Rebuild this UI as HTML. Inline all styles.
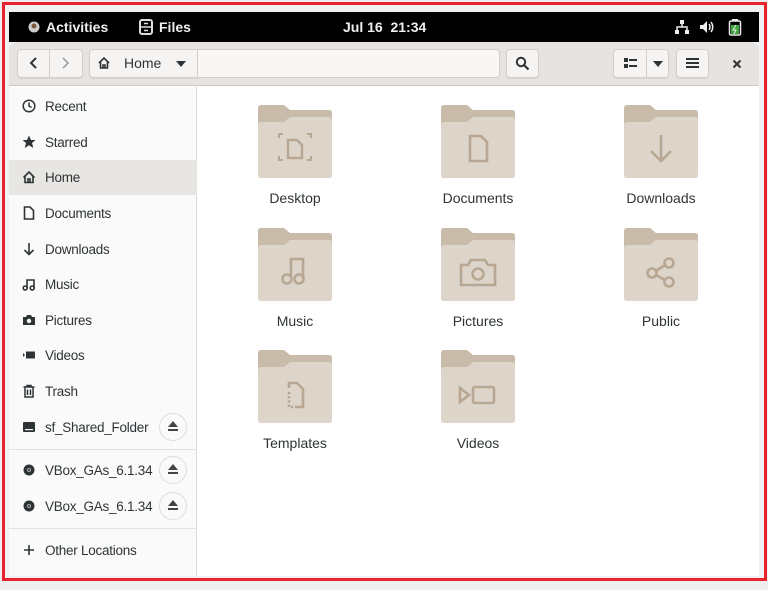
<!DOCTYPE html>
<html><head><meta charset="utf-8"><style>
*{margin:0;padding:0;box-sizing:border-box}
body{width:768px;height:590px;background:#efefef;position:relative;overflow:hidden;font-family:"Liberation Sans",sans-serif;font-size:14px;color:#2e3436}
.frame{position:absolute;left:2px;top:2px;width:765px;height:579px;border:3px solid #e8232b;background:#f0f0f0}
.top{position:absolute;left:9px;top:12px;width:750px;height:30px;background:#000;color:#eee;font-weight:bold;font-size:14px}
.top span{position:absolute;top:7px}
.win{position:absolute;left:9px;top:42px;width:750px;height:534px;background:#fff;border-radius:8px 8px 0 0;overflow:hidden}
.hb{position:absolute;left:0;top:0;width:750px;height:44px;background:#e6e3e0;border-bottom:1px solid #cdc7c2}
.btn{position:absolute;top:7px;height:29px;background:#f5f4f3;border:1px solid #d3cfcb;border-radius:4px;box-shadow:0 1px 1px rgba(0,0,0,.06)}
.side{position:absolute;left:0;top:45px;width:188px;height:489px;background:#fafafa;border-right:1px solid #dcdad7}
.it{position:absolute;left:0;width:188px;height:35px;line-height:35px;padding-left:36px;font-size:13.5px;letter-spacing:-0.25px;color:#2e3436}
.it svg{position:absolute;left:13px;top:10px}
.sep{position:absolute;left:0;width:188px;height:1px;background:#e4e2df}
.ej{position:absolute;left:150px;top:3px;width:28px;height:28px;border:1px solid #e0dcd8;border-radius:50%}
.ej:after{content:"";position:absolute;left:8px;top:7px;border-left:5px solid transparent;border-right:5px solid transparent;border-bottom:6px solid #444}
.ej:before{content:"";position:absolute;left:8px;top:15px;width:10px;height:2px;background:#444}
.f{position:absolute;width:120px;text-align:center;font-size:14px;color:#2e3436}
.f svg{display:block;margin:0 auto 11px}
</style></head><body>
<div class="frame"></div>
<div class="top">
<svg style="position:absolute;left:19px;top:9px" width="12" height="12"><circle cx="6" cy="6" r="5.5" fill="#ccc"/><circle cx="6" cy="5" r="2.5" fill="#7a5a3a"/></svg>
<span style="left:37px">Activities</span>
<svg style="position:absolute;left:130px;top:7px" width="14" height="16"><rect x="1" y="1" width="12" height="14" rx="2" fill="none" stroke="#ddd" stroke-width="2"/><path d="M1 8H13M5 4.5H9M5 11.5H9" stroke="#ddd" stroke-width="1.5"/></svg>
<span style="left:150px">Files</span>
<span style="left:334px;font-weight:bold">Jul 16&nbsp; 21:34</span>
<svg style="position:absolute;left:665px;top:7px" width="16" height="16" fill="#eee"><rect x="6" y="1" width="4" height="4"/><rect x="1" y="11" width="4" height="4"/><rect x="11" y="11" width="4" height="4"/><path d="M8 5V8M3 11V8H13V11" stroke="#eee" fill="none" stroke-width="1.5"/></svg>
<svg style="position:absolute;left:690px;top:7px" width="16" height="16" fill="#eee"><path d="M1 6H4L8 2V14L4 10H1Z"/><path d="M10 5Q12 8 10 11M12 3Q15.5 8 12 13" stroke="#eee" fill="none" stroke-width="1.5"/></svg>
<svg style="position:absolute;left:719px;top:6px" width="14" height="18"><rect x="1.5" y="3" width="11" height="14" rx="1.5" fill="none" stroke="#eee" stroke-width="1.5"/><rect x="4" y="1" width="6" height="2" fill="#eee"/><rect x="3" y="7" width="8" height="9" fill="#3da53d"/><path d="M8 7L5 12H8L6 16" stroke="#eee" fill="none" stroke-width="1"/></svg>
</div>
<div class="win">
<div class="hb">
<div class="btn" style="left:8px;width:66px"></div>
<div style="position:absolute;left:40px;top:8px;width:1px;height:27px;background:#d3cfcb"></div>
<svg style="position:absolute;left:19px;top:15px" width="12" height="12"><path d="M8 1L3 6L8 11" stroke="#2e3436" stroke-width="2" fill="none"/></svg>
<svg style="position:absolute;left:50px;top:15px" width="12" height="12"><path d="M4 1L9 6L4 11" stroke="#999" stroke-width="1.5" fill="none"/></svg>
<div class="btn" style="left:80px;width:110px;border-radius:4px 0 0 4px"></div>
<svg style="position:absolute;left:88px;top:14px" width="14" height="14"><path d="M2 7L7 2L12 7M3.5 6V12H10.5V6M6 12V9H8V12" stroke="#2e3436" stroke-width="1.6" fill="none"/></svg>
<span style="position:absolute;left:115px;top:13px;font-size:14px;color:#2e3436">Home</span>
<svg style="position:absolute;left:166px;top:18px" width="12" height="8"><path d="M1 1H11L6 7Z" fill="#2e3436"/></svg>
<div class="btn" style="left:188px;width:303px;background:#f8f7f6;border-radius:0 4px 4px 0;box-shadow:none"></div>
<div class="btn" style="left:497px;width:33px"></div>
<svg style="position:absolute;left:506px;top:14px" width="15" height="15"><circle cx="6" cy="6" r="4.2" stroke="#2e3436" stroke-width="2" fill="none"/><path d="M9 9L13.5 13.5" stroke="#2e3436" stroke-width="2.2"/></svg>
<div class="btn" style="left:604px;width:56px"></div>
<div style="position:absolute;left:637px;top:8px;width:1px;height:27px;background:#d3cfcb"></div>
<svg style="position:absolute;left:615px;top:16px" width="14" height="12" fill="#2e3436"><rect x="0" y="0" width="4" height="4"/><rect x="5" y="1" width="8" height="2"/><rect x="0" y="6" width="4" height="4"/><rect x="5" y="7" width="8" height="2"/></svg>
<svg style="position:absolute;left:643px;top:18px" width="12" height="8"><path d="M1 1H11L6 7Z" fill="#2e3436"/></svg>
<div class="btn" style="left:667px;width:33px"></div>
<svg style="position:absolute;left:677px;top:15px" width="13" height="12" fill="#2e3436"><rect y="1" width="13" height="2"/><rect y="5" width="13" height="2"/><rect y="9" width="13" height="2"/></svg>
<svg style="position:absolute;left:723px;top:17px" width="10" height="10"><path d="M1.5 1.5L8.5 8.5M8.5 1.5L1.5 8.5" stroke="#2e3436" stroke-width="2"/></svg>
</div>
<div class="side">
<div class="it" style="top:2px"><svg width="14" height="14"><circle cx="7" cy="7" r="5.8" stroke="#2e3436" stroke-width="1.5" fill="none"/><path d="M7 3.5V7L9.5 8.5" stroke="#2e3436" stroke-width="1.5" fill="none"/></svg>Recent</div>
<div class="it" style="top:38px"><svg width="14" height="14"><path d="M7 0.5L9 5H13.5L10 8L11.3 13L7 10.2L2.7 13L4 8L0.5 5H5Z" fill="#2e3436"/></svg>Starred</div>
<div class="it" style="top:73px;background:#e8e6e3"><svg width="14" height="14"><path d="M1.5 7.5L7 2L12.5 7.5M3 6.5V12.5H11V6.5M6 12.5V9H8V12.5" stroke="#2e3436" stroke-width="1.6" fill="none"/></svg>Home</div>
<div class="it" style="top:109px"><svg width="14" height="14"><path d="M2.5 1H8L11.5 4.5V13H2.5Z" stroke="#2e3436" stroke-width="1.6" fill="none"/></svg>Documents</div>
<div class="it" style="top:145px"><svg width="14" height="14"><path d="M7 1V12M2.5 8L7 12.5L11.5 8" stroke="#2e3436" stroke-width="1.6" fill="none"/></svg>Downloads</div>
<div class="it" style="top:180px"><svg width="14" height="14"><path d="M5 11V3H12V11" stroke="#2e3436" stroke-width="1.6" fill="none"/><circle cx="3.2" cy="11" r="2" stroke="#2e3436" stroke-width="1.6" fill="none"/><circle cx="10.2" cy="11" r="2" stroke="#2e3436" stroke-width="1.6" fill="none"/></svg>Music</div>
<div class="it" style="top:216px"><svg width="14" height="14"><path d="M1 4H4L5 2H9L10 4H13V12H1Z" fill="#2e3436"/><circle cx="7" cy="8" r="2.2" fill="#fafafa"/></svg>Pictures</div>
<div class="it" style="top:251px"><svg width="14" height="14"><path d="M1 5L3 7L1 9Z" fill="#2e3436"/><rect x="4" y="3.5" width="9" height="7" fill="#2e3436"/></svg>Videos</div>
<div class="it" style="top:287px"><svg width="14" height="14"><path d="M1.5 3H12.5M5 3V1.5H9V3M3 3.5V13H11V3.5M5.5 5.5V11M8.5 5.5V11" stroke="#2e3436" stroke-width="1.5" fill="none"/></svg>Trash</div>
<div class="it" style="top:323px"><svg width="14" height="14"><rect x="1" y="2" width="12" height="10" rx="1" fill="#2e3436"/><rect x="3" y="9" width="8" height="1.2" fill="#fafafa"/></svg>sf_Shared_Folder<div class="ej"></div></div>
<div class="sep" style="top:362px"></div>
<div class="it" style="top:366px"><svg width="14" height="14"><circle cx="7" cy="7" r="5.5" fill="#2e3436"/><circle cx="7" cy="7" r="2" fill="#aaa"/><circle cx="7" cy="7" r="1" fill="#2e3436"/></svg>VBox_GAs_6.1.34<div class="ej"></div></div>
<div class="it" style="top:402px"><svg width="14" height="14"><circle cx="7" cy="7" r="5.5" fill="#2e3436"/><circle cx="7" cy="7" r="2" fill="#aaa"/><circle cx="7" cy="7" r="1" fill="#2e3436"/></svg>VBox_GAs_6.1.34<div class="ej"></div></div>
<div class="sep" style="top:441px"></div>
<div class="it" style="top:446px"><svg width="14" height="14"><path d="M7 2V12M2 7H12" stroke="#2e3436" stroke-width="1.6"/></svg>Other Locations</div>
</div>
</div>

<svg width="0" height="0" style="position:absolute"><defs>
<g id="fd"><path d="M3 0H26L32 5H71Q74 5 74 8V66H0V3Q0 0 3 0Z" fill="#c9bba9"/><path d="M0 20Q0 17 3 17H26L32 12H71Q74 12 74 15V70Q74 73 71 73H3Q0 73 0 70Z" fill="#ddd4ca"/></g>
</defs></svg>

<div class="f" style="left:235px;top:105px"><svg width="74" height="74"><use href="#fd"/><g stroke="#b8a793" stroke-width="2.4" fill="none"><path d="M30 35H39L44 40V53H30Z"/><path d="M21 33V29H25M49 29H53V33M21 51V55H25M49 55H53V51" stroke-width="2"/></g></svg>Desktop</div>
<div class="f" style="left:418px;top:105px"><svg width="74" height="74"><use href="#fd"/><path d="M29 31H40L46 37V56H29Z" stroke="#b8a793" stroke-width="2.6" fill="none"/></svg>Documents</div>
<div class="f" style="left:601px;top:105px"><svg width="74" height="74"><use href="#fd"/><path d="M37 30V57M27 46L37 56L47 46" stroke="#b8a793" stroke-width="2.6" fill="none"/></svg>Downloads</div>

<div class="f" style="left:235px;top:228px"><svg width="74" height="74"><use href="#fd"/><g stroke="#b8a793" stroke-width="2.6" fill="none"><path d="M33 50V31H45V50"/><circle cx="29" cy="51" r="4.5"/><circle cx="41" cy="51" r="4.5"/></g></svg>Music</div>
<div class="f" style="left:418px;top:228px"><svg width="74" height="74"><use href="#fd"/><g stroke="#b8a793" stroke-width="2.6" fill="none"><path d="M20 37H27L30 32H44L47 37H54V57H20Z"/><circle cx="37" cy="46" r="5.5"/></g></svg>Pictures</div>
<div class="f" style="left:601px;top:228px"><svg width="74" height="74"><use href="#fd"/><g stroke="#b8a793" stroke-width="2.6" fill="none"><circle cx="45" cy="35" r="4.5"/><circle cx="45" cy="54" r="4.5"/><circle cx="28" cy="45" r="4.5"/><path d="M32 43L41 37M32 47L41 52"/></g></svg>Public</div>

<div class="f" style="left:235px;top:350px"><svg width="74" height="74"><use href="#fd"/><g stroke="#b8a793" stroke-width="2.6" fill="none"><path d="M31 38V33H39L45 39V57H37"/><path d="M31 42V57H35" stroke-dasharray="2.2 2"/></g></svg>Templates</div>
<div class="f" style="left:418px;top:350px"><svg width="74" height="74"><use href="#fd"/><g stroke="#b8a793" stroke-width="2.6" fill="none"><rect x="32" y="37" width="21" height="16" rx="2"/><path d="M19 38V52L28 45Z"/></g></svg>Videos</div>
</body></html>
